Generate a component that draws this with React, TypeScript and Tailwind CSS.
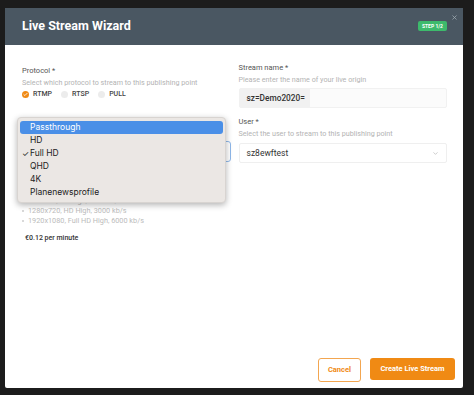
import { Check, ChevronDown, X } from 'lucide-react';

const PROFILES = ['Passthrough', 'HD', 'Full HD', 'QHD', '4K', 'Planenewsprofile'];

const RENDITIONS = [
  '854x480, SD High, 1500 kb/s',
  '1280x720, HD High, 3000 kb/s',
  '1920x1080, Full HD High, 6000 kb/s',
];

function Radio({ label, checked }: { label: string; checked?: boolean }) {
  return (
    <span className="flex items-center gap-[4px]">
      {checked ? (
        <span className="w-[7px] h-[7px] rounded-full bg-[#f08a14] flex items-center justify-center">
          <Check className="w-[5px] h-[5px] text-white" strokeWidth={4} />
        </span>
      ) : (
        <span className="w-[7px] h-[7px] rounded-full bg-[#ececec]" />
      )}
      <span className="text-[7px] font-medium text-[#444]">{label}</span>
    </span>
  );
}

function Field({ label, hint, children, top }: { label: string; hint: string; children: React.ReactNode; top: string }) {
  return (
    <div className={top}>
      <div className="text-[7.5px] leading-[10px] text-[#555]">{label}</div>
      <div className="mt-[2px] text-[7.2px] leading-[10px] text-[#b3b3b3]">{hint}</div>
      {children}
    </div>
  );
}

export default function App() {
  return (
    <div
      className="relative w-[474px] h-[395px] bg-[#1c1c1c] pt-[8px] pl-[5px] overflow-hidden"
      style={{ fontFamily: 'Roboto, "Noto Sans", sans-serif' }}
    >
      <div className="w-[458px] h-[380px] bg-white flex flex-col rounded-[2px]">
        <header className="relative h-[37px] bg-[#4a5762] flex items-center pl-[17px] pr-[16px]">
          <h1 className="text-[12.5px] font-bold text-white">Live Stream Wizard</h1>
          <span className="ml-auto mt-[-1px] h-[10px] px-[4px] rounded-[2px] bg-[#3dba6c] text-white text-[5px] font-bold leading-[10px]">
            STEP 1/2
          </span>
          <X className="absolute top-[6px] right-[5px] w-[7px] h-[7px] text-[#a3adb4]" strokeWidth={2.5} />
        </header>

        <div className="flex-1 grid grid-cols-2 gap-[8px] px-[16px] pl-[17px]">
          <div>
            <Field label="Protocol *" hint="Select which protocol to stream to this publishing point" top="mt-[21px]">
              <div className="mt-[1px] h-[10px] flex items-center gap-[9px]">
                <Radio label="RTMP" checked />
                <Radio label="RTSP" />
                <Radio label="PULL" />
              </div>
            </Field>
            {/* profile select, covered by the open option list */}
            <div className="mt-[42px] h-[21px] rounded-[3px] border border-[#8fb8ea]" />
            <ul className="mt-[34px]">
              {RENDITIONS.map((r) => (
                <li key={r} className="flex items-center gap-[4px] text-[7.3px] leading-[10px] text-[#bbbbbb]">
                  <span className="w-[2px] h-[2px] rounded-full bg-[#cccccc]" />
                  {r}
                </li>
              ))}
            </ul>
            <div className="mt-[7px] pl-[3px] text-[7px] leading-[10px] font-medium text-[#333]">€0.12 per minute</div>
          </div>

          <div>
            <Field label="Stream name *" hint="Please enter the name of your live origin" top="mt-[18px]">
              <div className="mt-[3px] h-[20px] rounded-[2px] border border-[#f1f1f1] bg-[#fbfbfb] flex items-stretch">
                <span className="flex items-center pl-[7px] pr-[5px] bg-[#f1f1f1] text-[8.3px] font-medium text-[#333]">
                  sz=Demo2020=
                </span>
              </div>
            </Field>
            <Field label="User *" hint="Select the user to stream to this publishing point" top="mt-[9px]">
              <div className="mt-[4px] h-[20px] rounded-[2px] border border-[#efefef] flex items-center pl-[7px] pr-[7px] text-[8.5px] text-[#333]">
                sz8ewftest
                <ChevronDown className="ml-auto w-[7px] h-[7px] text-[#aaa]" strokeWidth={2} />
              </div>
            </Field>
          </div>
        </div>

        <footer className="flex justify-end items-start gap-[9px] pr-[8px] pb-[6px]">
          <button className="w-[43px] h-[24px] rounded-[3px] border border-[#f3a650] text-[#f08a14] text-[7.5px] font-bold">
            Cancel
          </button>
          <button className="w-[85px] h-[22px] rounded-[3px] bg-[#f08a14] text-white text-[7.5px] font-bold">
            Create Live Stream
          </button>
        </footer>
      </div>

      <div
        className="absolute left-[17px] top-[117px] w-[209px] h-[86px] rounded-[4px] bg-[#ebe7e4] shadow-[0_2px_6px_rgba(0,0,0,0.3)] border border-[#d8d4d1] pt-[3px] px-[2px]"
        style={{ fontFamily: 'Inter, "Liberation Sans", sans-serif' }}
      >
        {PROFILES.map((p, i) => (
          <div
            key={p}
            className={`relative h-[13px] flex items-center pl-[10px] text-[8.5px] rounded-[3px] ${
              i === 0 ? 'bg-[#4a8fe7] text-white' : 'text-[#222]'
            }`}
          >
            {p === 'Full HD' && <span className="absolute left-[2px] text-[8px]">✓</span>}
            {p}
          </div>
        ))}
      </div>
    </div>
  );
}
